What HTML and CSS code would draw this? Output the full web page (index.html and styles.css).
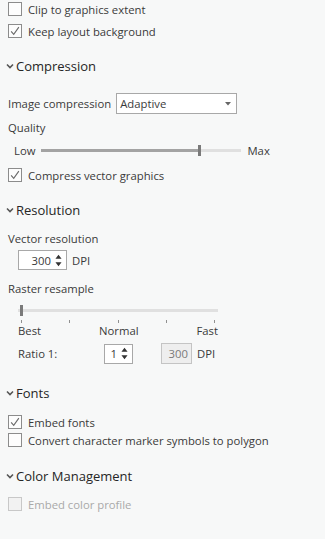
FILE: index.html
```html
<!DOCTYPE html>
<html>
<head>
<meta charset="utf-8">
<link rel="stylesheet" href="styles.css">
</head>
<body>
<div class="panel">
  <div class="check r1"><span class="box"></span><span>Clip to graphics extent</span></div>
  <div class="check r2"><span class="box"><svg viewBox="0 0 14 14" class="tick"><path d="M2.5 7.5 L5.5 11 L11.5 2.5"/></svg></span><span>Keep layout background</span></div>

  <div class="header h-comp"><svg class="chev" viewBox="0 0 8 6"><path d="M1 1.5 L4 4.5 L7 1.5"/></svg><span>Compression</span></div>
  <div class="row imgcomp">
    <span class="lbl">Image compression</span>
    <div class="dropdown"><span>Adaptive</span><svg class="dd-arrow" viewBox="0 0 6 4"><path d="M0 0 H6 L3 3.5 Z"/></svg></div>
  </div>
  <div class="text quality">Quality</div>
  <div class="row qslider">
    <span class="lbl low">Low</span>
    <div class="track q"><div class="fill"></div><div class="thumb"></div></div>
    <span class="lbl max">Max</span>
  </div>
  <div class="check r-cvg"><span class="box"><svg viewBox="0 0 14 14" class="tick"><path d="M2.5 7.5 L5.5 11 L11.5 2.5"/></svg></span><span>Compress vector graphics</span></div>

  <div class="header h-res"><svg class="chev" viewBox="0 0 8 6"><path d="M1 1.5 L4 4.5 L7 1.5"/></svg><span>Resolution</span></div>
  <div class="text vres">Vector resolution</div>
  <div class="row spinrow">
    <div class="spin w50"><span class="val">300</span><svg class="arrows" viewBox="0 0 8 14"><path d="M0.5 5 L4 0.5 L7.5 5 Z M0.5 9 L4 13.5 L7.5 9 Z"/></svg></div>
    <span class="unit">DPI</span>
  </div>
  <div class="text rres">Raster resample</div>
  <div class="rslider">
    <div class="track r"><div class="thumb"></div></div>
    <div class="ticks"><i></i><i></i><i></i><i></i><i></i></div>
    <div class="slabels"><span>Best</span><span>Normal</span><span>Fast</span></div>
  </div>
  <div class="row ratio">
    <span class="lbl rlbl">Ratio 1:</span>
    <div class="spin w30"><span class="val">1</span><svg class="arrows" viewBox="0 0 8 14"><path d="M0.5 5 L4 0.5 L7.5 5 Z M0.5 9 L4 13.5 L7.5 9 Z"/></svg></div>
    <div class="dis-box"><span>300</span></div>
    <span class="unit">DPI</span>
  </div>

  <div class="header h-fonts"><svg class="chev" viewBox="0 0 8 6"><path d="M1 1.5 L4 4.5 L7 1.5"/></svg><span>Fonts</span></div>
  <div class="check r-ef"><span class="box"><svg viewBox="0 0 14 14" class="tick"><path d="M2.5 7.5 L5.5 11 L11.5 2.5"/></svg></span><span>Embed fonts</span></div>
  <div class="check r-cc"><span class="box"></span><span>Convert character marker symbols to polygon</span></div>

  <div class="header h-cm"><svg class="chev" viewBox="0 0 8 6"><path d="M1 1.5 L4 4.5 L7 1.5"/></svg><span>Color Management</span></div>
  <div class="check r-ecp disabled"><span class="box"></span><span>Embed color profile</span></div>
</div>
</body>
</html>
```

FILE: styles.css
```css
html, body {
  margin: 0;
  padding: 0;
  background: #f7f8f8;
}
body {
  width: 325px;
  height: 539px;
  overflow: hidden;
  font-family: "Open Sans", "Noto Sans", sans-serif;
  font-size: 11.3px;
  color: #3a3a3a;
}
.panel {
  padding-left: 8px;
}
.check {
  display: flex;
  align-items: center;
  height: 18px;
  gap: 6px;
}
.box {
  width: 12px;
  height: 12px;
  border: 1px solid #8c8c8c;
  background: #fdfdfd;
  flex: none;
  display: flex;
}
.tick {
  width: 12px;
  height: 12px;
  fill: none;
  stroke: #6a6a6a;
  stroke-width: 1.3;
}
.disabled { color: #a9a9a9; }
.disabled .box { border-color: #c8c8c8; background: #f2f2f2; }

.r1 { margin-top: 0; }
.r2 { margin-top: 4px; }

.header {
  display: flex;
  align-items: center;
  height: 20px;
  margin-left: -2px;
  gap: 2px;
  font-size: 13px;
  color: #262626;
}
.chev {
  width: 8px;
  height: 6px;
  fill: none;
  stroke: #555;
  stroke-width: 1.6;
}
.h-comp { margin-top: 16px; }
.h-res { margin-top: 16px; }
.h-fonts { margin-top: 19px; }
.h-cm { margin-top: 17px; }

.row {
  display: flex;
  align-items: center;
}
.text {
  height: 16px;
  line-height: 16px;
}
.imgcomp { margin-top: 17px; height: 21px; }
.dropdown {
  margin-left: 5px;
  width: 111px;
  height: 19px;
  border: 1px solid #a8a8a8;
  background: #fff;
  display: flex;
  align-items: center;
  justify-content: space-between;
  padding: 0 5px 0 3px;
  box-sizing: content-box;
}
.dd-arrow { width: 6px; height: 4px; fill: #666; }
.quality { margin-top: 6px; }
.qslider { margin-top: 6px; height: 16px; }
.low { margin-left: 6px; }
.track {
  position: relative;
  height: 3px;
  background: #e0e0e0;
}
.track.q { width: 200px; margin: 0 6px 0 6px; }
.fill { width: 158px; height: 3px; background: #a3a3a3; }
.thumb {
  position: absolute;
  top: -4px;
  width: 3px;
  height: 11px;
  background: #7a7a7a;
}
.track.q .thumb { left: 157px; }
.r-cvg { margin-top: 8px; }
.vres { margin-top: 11px; }
.spinrow { margin-top: 3px; height: 20px; margin-left: 10px; }
.spin {
  height: 18px;
  border: 1px solid #a8a8a8;
  background: #fff;
  display: flex;
  align-items: center;
  justify-content: flex-end;
  gap: 4px;
  padding-right: 4px;
}
.w50 { width: 43px; }
.w30 { width: 23px; }
.arrows { width: 7px; height: 13px; fill: #333; }
.unit { margin-left: 5px; }
.rres { margin-top: 11px; }
.rslider { margin-left: 10px; width: 200px; margin-top: 0; }
.track.r { margin-top: 12px; width: 200px; }
.track.r .thumb { left: 2px; }
.ticks {
  display: flex;
  justify-content: space-between;
  margin-top: 8px;
  padding: 0 3px;
  height: 3px;
}
.ticks i { width: 1px; height: 3px; background: #909090; }
.slabels {
  display: flex;
  justify-content: space-between;
  height: 16px;
  line-height: 16px;
}
.ratio { margin-top: 4px; height: 21px; margin-left: 10px; }
.rlbl { width: 86px; }
.dis-box {
  margin-left: 28px;
  width: 26px;
  height: 19px;
  border: 1px solid #c4c4c4;
  background: #eeeeee;
  color: #7a7a7a;
  display: flex;
  align-items: center;
  justify-content: flex-end;
  padding-right: 3px;
}
.r-ef { margin-top: 10px; }
.r-cc { margin-top: 0; }
.r-ecp { margin-top: 9px; }
```
